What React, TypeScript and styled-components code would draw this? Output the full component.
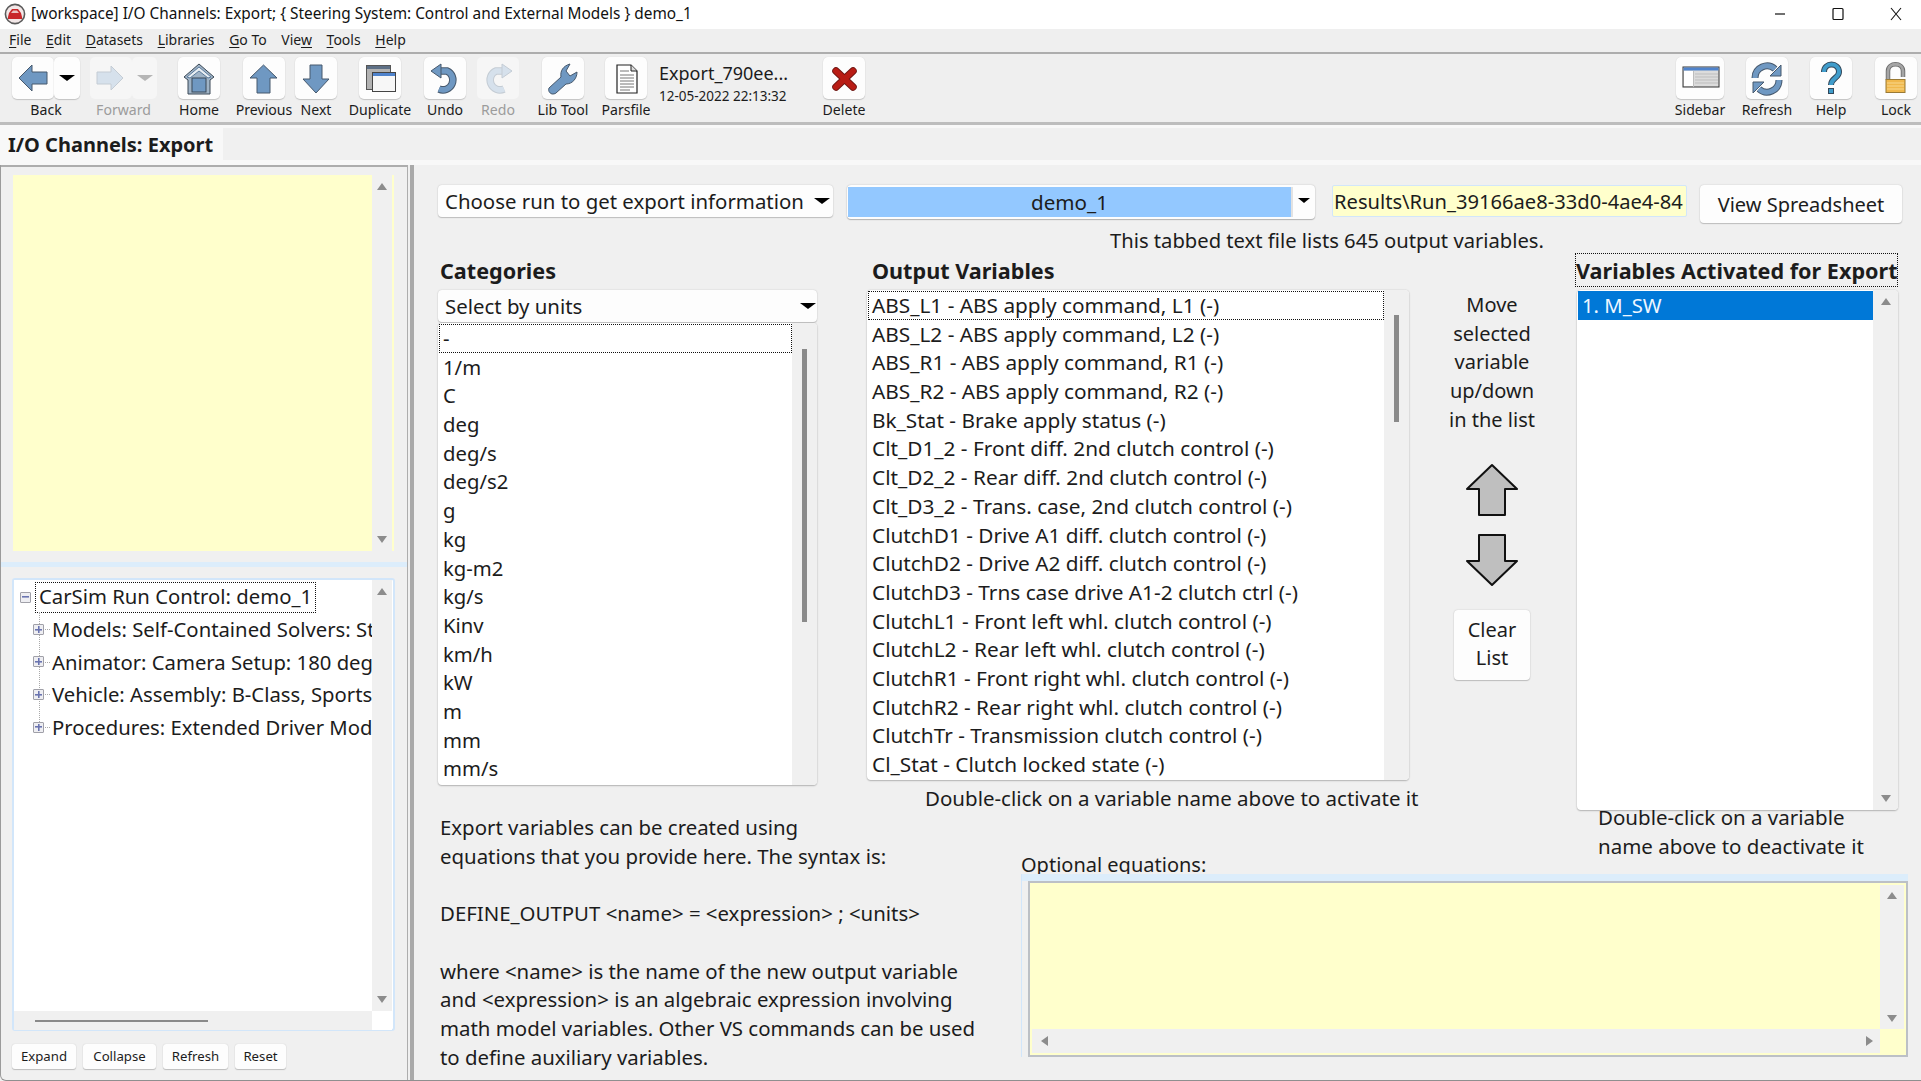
import React from "react";
import styled, { createGlobalStyle } from "styled-components";

const FONT = `"Noto Sans", "Open Sans", sans-serif`;
const TXT = "#1c1c1c";

const Global = createGlobalStyle`
  html, body { margin: 0; padding: 0; background: #f0f0f0; overflow: hidden; }
  * { box-sizing: border-box; }
`;

const Page = styled.div`
  width: 1921px; height: 1081px; display: flex; flex-direction: column;
  background: #f0f0f0; font-family: ${FONT}; color: ${TXT}; overflow: hidden;
`;

/* Title bar */
const TitleBar = styled.div`
  height: 29px; background: #fff; display: flex; align-items: center; padding: 0 0 2px 4px; flex: none;
`;
const TitleText = styled.span`
  font-size: 15.4px; margin-left: 5px; white-space: nowrap; line-height: 26px; color: #111;
`;
const WinControls = styled.div`
  margin-left: auto; display: flex; align-items: center; gap: 34px; padding-right: 13px;
`;

/* Menu */
const MenuBar = styled.div`
  height: 23px; background: #efefef; display: flex; padding: 0 0 2px 9px; gap: 14.6px; align-items: center; flex: none;
`;
const MenuItem = styled.span`
  font-size: 14px; line-height: 21px; white-space: nowrap;
  u { text-underline-offset: 2px; }
`;

/* Toolbar */
const ToolbarWrap = styled.div`
  height: 73px; flex: none; background: #efefef; border-top: 2px solid #adadad; border-bottom: 3px solid #bdbdbd;
  display: flex; padding: 3px 4px 0 12px;
`;
const Slot = styled.div<{ $gap?: number; $w?: number }>`
  margin-left: ${(p) => p.$gap ?? 0}px; width: ${(p) => p.$w ?? 42}px; flex: none;
  display: flex; flex-direction: column; align-items: center;
`;
const ToolFace = styled.div<{ $dim?: boolean; $w?: number; $split?: boolean }>`
  width: ${(p) => p.$w ?? 42}px; height: 42px; border-radius: 5px; background: ${(p) => (p.$dim ? "#f6f6f6" : "#fdfdfd")};
  box-shadow: ${(p) => (p.$dim ? "none" : "0 1px 1px #c4c4c4, 0 0 1px #cfcfcf")};
  display: flex; align-items: center; justify-content: center; flex: none;
`;
const FaceGroup = styled.div`display: flex;`;
const ToolLabel = styled.div<{ $dim?: boolean }>`
  font-size: 14.1px; line-height: 20px; margin-top: 1px; white-space: nowrap;
  color: ${(p) => (p.$dim ? "#9c9c9c" : TXT)};
`;
const FileInfo = styled.div`
  margin-left: 12px; width: 140px; flex: none; padding-top: 4px;
`;
const FileName = styled.div`font-size: 18px; line-height: 25px; white-space: nowrap;`;
const FileDate = styled.div`font-size: 13.5px; line-height: 20px; white-space: nowrap;`;
const Spacer = styled.div`flex: 1;`;
const Caret = styled.div<{ $dim?: boolean; $size?: number }>`
  width: 0; height: 0;
  border-left: ${(p) => p.$size ?? 8.5}px solid transparent; border-right: ${(p) => p.$size ?? 8.5}px solid transparent;
  border-top: ${(p) => ((p.$size ?? 8.5) * 0.8).toFixed(1)}px solid ${(p) => (p.$dim ? "#b5b5b5" : "#000")};
`;

/* Tab strip */
const TabStrip = styled.div`
  height: 35px; flex: none; background: #f0f0f0; border-top: 3px solid #f8f8f8; display: flex;
`;
const Tab = styled.div`
  width: 223px; background: #f8f8f8; font-weight: 700; font-size: 20px; line-height: 33px; padding-left: 8px; white-space: nowrap;
`;

/* Body */
const Body = styled.div`
  flex: 1; display: flex; flex-direction: column; min-height: 0;
  border-bottom: 1px solid #8f8f8f; border-left: 1px solid #9b9b9b; border-bottom-left-radius: 6px;
`;
const TopBand = styled.div`height: 5px; background: #f8f8f8; flex: none; margin-left: -1px;`;
const Columns = styled.div`flex: 1; display: flex; min-height: 0;`;
const Sidebar = styled.aside`
  width: 407px; flex: none; border-top: 2px solid #adadad; border-right: 1px solid #adadad;
  display: flex; flex-direction: column;
`;
const Divider = styled.div`
  width: 4px; margin-left: 2px; flex: none; background: #a9a9a9;
`;

const InfoPanel = styled.div`
  margin: 8px 13px 0 12px; height: 376px; flex: none; background: #ffffcc; display: flex; padding-right: 2px;
`;
const InfoBody = styled.div`flex: 1;`;
const VScroll = styled.div<{ $w?: number; $bg?: string; $pad?: number }>`
  width: ${(p) => p.$w ?? 20}px; flex: none; background: ${(p) => p.$bg ?? "#f0f0f0"};
  display: flex; flex-direction: column; align-items: center; justify-content: space-between;
  padding: ${(p) => p.$pad ?? 8}px 0;
`;
const Arrow = styled.div<{ $dir: "up" | "down" | "left" | "right" }>`
  width: 0; height: 0;
  ${(p) =>
    p.$dir === "up"
      ? "border-left:5px solid transparent;border-right:5px solid transparent;border-bottom:7px solid #8c8c8c;"
      : p.$dir === "down"
      ? "border-left:5px solid transparent;border-right:5px solid transparent;border-top:7px solid #8c8c8c;"
      : p.$dir === "left"
      ? "border-top:5px solid transparent;border-bottom:5px solid transparent;border-right:7px solid #8c8c8c;"
      : "border-top:5px solid transparent;border-bottom:5px solid transparent;border-left:7px solid #8c8c8c;"}
`;
const BlueBand = styled.div`height: 5px; margin-top: 11px; background: #dcedfb; flex: none;`;

const TreeBox = styled.div`
  margin: 11px 12px 0 11px; height: 453px; flex: none; border: 2px solid #d2e6fa; border-radius: 3px; background: #fff;
  display: grid; grid-template-columns: 358px 20px; grid-template-rows: 431px 19px;
`;
const TreeScrollArea = styled.div`overflow: hidden; padding-top: 1px; background: #fff;`;
const TreeRow = styled.div<{ $child?: boolean }>`
  display: flex; align-items: center; height: ${(p) => (p.$child ? 32.6 : 32)}px; white-space: nowrap;
  font-size: 20.3px; position: relative;
`;
const Expander = styled.span<{ $root?: boolean }>`
  width: 11px; height: 11px; border: 1px solid #a0a0a8; background: #eeeef2; border-radius: 1px; flex: none;
  margin-left: ${(p) => (p.$root ? 6 : -6)}px; display: inline-flex; align-items: center; justify-content: center;
`;
const ExpIcon = styled.span<{ $plus?: boolean }>`
  width: 7px; height: 7px; flex: none;
  background:
    linear-gradient(#6a74b0, #6a74b0) center / 7px 1.6px no-repeat
    ${(p) => (p.$plus ? ", linear-gradient(#6a74b0, #6a74b0) center / 1.6px 7px no-repeat" : "")};
`;
const TreeFocus = styled.span`
  border: 1px dotted #111; height: 31px; line-height: 27px; padding: 0 3px; margin-left: 4px;
`;
const TreeChildren = styled.div`
  position: relative; margin-left: 25px;
  &::before { content: ""; position: absolute; left: 0; top: -1px; bottom: 17px; border-left: 1px dotted #a9a9a9; }
`;
const TreeLabel = styled.span`
  margin-left: 8px; position: relative; line-height: 28px;
  &::before { content: ""; position: absolute; left: -7px; top: 50%; width: 5px; border-top: 1px dotted #a9a9a9; }
`;
const HScrollBar = styled.div`
  background: #f0f0f0; display: flex; align-items: center; padding-left: 21px;
`;
const HThumb = styled.div`width: 173px; height: 2px; background: #8a8a8a;`;
const Corner = styled.div`background: #fff;`;

const TreeButtons = styled.div`display: flex; gap: 7px; margin: 13px 0 0 11px;`;
const SmallButton = styled.div<{ $w: number }>`
  width: ${(p) => p.$w}px; height: 25px; background: #fdfdfd; border-radius: 3px; font-size: 13.2px; line-height: 24px;
  text-align: center; box-shadow: 0 1px 1px #bdbdbd, 0 0 1px #bdbdbd;
`;

/* Main */
const Main = styled.main`
  flex: 1; min-width: 0; padding: 20px 0 0 24px; display: flex; flex-direction: column; font-size: 20px;
`;
const TopRow = styled.div`display: flex; height: 38px; flex: none; align-items: flex-start;`;
const SelectBox = styled.div<{ $w: number; $pr: number }>`
  width: ${(p) => p.$w}px; height: 32px; flex: none; background: #fdfdfd; border-radius: 4px;
  box-shadow: 0 1px 1px #bdbdbd, 0 0 1.5px #bdbdbd; display: flex; align-items: center; padding: 0 ${(p) => p.$pr}px 0 7px;
  white-space: nowrap; justify-content: space-between; line-height: 30px; font-size: 20.4px;
`;
const DemoSelect = styled.div`
  margin-left: 14px; width: 468px; height: 34px; flex: none; border-radius: 4px; background: #fdfdfd;
  box-shadow: 0 1px 1px #b3b3b3, 0 0 1.5px #b3b3b3; display: flex; padding: 2px 0 2px 1px;
`;
const DemoValue = styled.div`
  width: 445px; background: #93c8ff; text-align: center; line-height: 30px; border-right: 2px solid #e2e2e2; font-size: 20.6px;
`;
const DemoCaret = styled.div`flex: 1; display: flex; align-items: center; justify-content: center; padding-bottom: 3px;`;
const ResultsField = styled.div`
  margin-left: 17px; width: 355px; height: 32px; flex: none; background: #ffffcc; border: 1px solid #d2e6fa; border-radius: 2px;
  overflow: hidden; white-space: nowrap; line-height: 30px; padding-left: 1px; font-size: 20.15px;
`;
const ViewButton = styled.div`
  margin-left: 13px; width: 202px; height: 38px; flex: none; background: #fdfdfd; border-radius: 4px; text-align: center; line-height: 39px;
  box-shadow: 0 1px 1px #bdbdbd, 0 0 1.5px #bdbdbd; white-space: nowrap;
`;
const HintLine = styled.div`
  height: 30px; flex: none; line-height: 35px; padding-left: 672px; white-space: nowrap; font-size: 20.2px;
`;
const ListsRow = styled.div`display: flex; height: 560px; flex: none;`;
const Column = styled.div<{ $w: number; $gap?: number }>`
  width: ${(p) => p.$w}px; margin-left: ${(p) => p.$gap ?? 0}px; flex: none; display: flex; flex-direction: column;
`;
const Heading = styled.div<{ $focus?: boolean; $pad?: number }>`
  font-weight: 700; font-size: 21.6px; white-space: nowrap;
  height: ${(p) => (p.$focus ? 34 : 37)}px; line-height: 36px; flex: none;
  padding-left: ${(p) => p.$pad ?? 2}px;
  margin-bottom: ${(p) => (p.$focus ? 3 : 0)}px;
  ${(p) => (p.$focus ? "outline: 1px dotted #111; outline-offset: -1px;" : "")}
`;
const ListBox = styled.div<{ $h: number; $mt?: number; $ml?: number }>`
  height: ${(p) => p.$h}px; margin-top: ${(p) => p.$mt ?? 0}px; margin-left: ${(p) => p.$ml ?? 0}px; flex: none; background: #fff; border-radius: 4px;
  box-shadow: 0 1px 1.5px #b5b5b5, 0 0 1.5px #bdbdbd; display: flex; overflow: hidden;
`;
const Rows = styled.div<{ $fs: number }>`flex: 1; min-width: 0; padding: 1px 0 0 1px; font-size: ${(p) => p.$fs}px;`;
const Row = styled.div<{ $focus?: boolean; $sel?: boolean }>`
  height: 28.7px; line-height: 29.4px; padding-left: 4px; white-space: nowrap;
  ${(p) => (p.$focus ? "outline: 1px dotted #111; outline-offset: -1px;" : "")}
  ${(p) => (p.$sel ? "background: #0078d7; color: #eef6ff;" : "")}
`;
const ThumbTrack = styled.div<{ $w: number }>`
  width: ${(p) => p.$w}px; flex: none; background: #f0f0f0; display: flex; justify-content: center;
`;
const Thumb = styled.div<{ $top: number; $h: number }>`
  width: 5px; height: ${(p) => p.$h}px; margin-top: ${(p) => p.$top}px; background: #8a8a8a;
`;
const Caption = styled.div<{ $pad: number; $mt?: number }>`
  padding-left: ${(p) => p.$pad}px; margin-top: ${(p) => p.$mt ?? 0}px; line-height: 28.7px; white-space: nowrap; font-size: 20.5px;
`;
const MoveColumn = styled.div`
  width: 166px; flex: none; padding-top: 38px; display: flex; flex-direction: column; align-items: center;
`;
const MoveText = styled.div`text-align: center; line-height: 28.7px;`;
const MoveArrows = styled.div`display: flex; flex-direction: column; gap: 16px; margin-top: 28px;`;
const ClearButton = styled.div`
  margin-top: 23px; width: 76px; height: 70px; background: #fdfdfd; border-radius: 4px; text-align: center;
  padding-top: 6px; line-height: 28.7px; box-shadow: 0 1px 1px #bdbdbd, 0 0 1.5px #bdbdbd;
`;
const BottomRow = styled.div`flex: 1; display: flex; min-height: 0;`;
const HelpText = styled.div`width: 583px; flex: none; padding-left: 2px; line-height: 28.7px; white-space: pre-line; font-size: 20.4px;`;
const EqColumn = styled.div`flex: 1; display: flex; flex-direction: column; padding-top: 43px;`;
const EqLabel = styled.div`height: 18px; line-height: 18px; white-space: nowrap;`;
const EqFrame = styled.div`
  width: 887px; border-left: 1px solid #d2e6fa; background: linear-gradient(#dcedfb 7px, transparent 7px); padding: 7px 0 0 6px;
`;
const EqBox = styled.div`
  width: 880px; height: 176px; border: 2px solid #bcc0c6; background: #ffffcc; padding: 2px;
  display: grid; grid-template-columns: 1fr 24px; grid-template-rows: 1fr 24px;
`;
const EqHScroll = styled.div`
  background: #f0f0f0; display: flex; align-items: center; justify-content: space-between; padding: 0 7px 0 9px;
`;
const EqBlank = styled.div``;

const BLUE = "#6f98c2";
const EDGE = "#46586c";
const PBLUE = "#d6e1ec";
const PEDGE = "#c4ccd4";

const Ic: React.FC<{ children: React.ReactNode; w?: number }> = ({ children, w = 42 }) => (
  <svg width={w} height={42} viewBox={`0 0 ${w} 42`} fill="none">{children}</svg>
);
const LeftArrow = (
  <Ic><path d="M7 21 L20 8 V15 H35 V27 H20 V34 Z" fill={BLUE} stroke={EDGE} /></Ic>
);
const RightArrow = (
  <Ic><path d="M33 21 L21 9 V15 H7 V27 H21 V33 Z" fill={PBLUE} stroke={PEDGE} /></Ic>
);
const HomeIcon = (
  <Ic>
    <path d="M21 7 L36 20 L32 23 V37 H10 V23 L6 20 Z" fill="#9fb3c6" stroke="#3a4856" />
    <path d="M21 10 L33 20 L30 21 L21 14 L12 21 L9 20 Z" fill="#e8eef3" stroke="#5d7c9c" />
    <rect x="14" y="21" width="14" height="14" fill={BLUE} stroke="#3a4856" />
  </Ic>
);
const UpIcon = <Ic><path d="M20.5 8 L34 21 H27 V36 H14 V21 H7 Z" fill={BLUE} stroke={EDGE} /></Ic>;
const DownIcon = <Ic><path d="M21 36 L8 22 H15 V8 H27 V22 H34 Z" fill={BLUE} stroke={EDGE} /></Ic>;
const DupIcon = (
  <Ic>
    <rect x="7.5" y="8.5" width="24" height="24" fill="#b2b2b2" stroke="#555" />
    <rect x="8" y="9" width="23" height="3" fill="#5d6f85" />
    <rect x="13.5" y="15.5" width="23" height="19" fill="#f7f7f7" stroke="#444" />
    <rect x="14" y="16" width="22" height="3" fill="#4f83cc" />
  </Ic>
);
const UndoIcon = (
  <Ic>
    <path d="M15 14 H23 A9.5 9.5 0 1 1 15 32" stroke={EDGE} strokeWidth="7.5" />
    <path d="M15 14 H23 A9.5 9.5 0 1 1 15 32" stroke={BLUE} strokeWidth="5.5" />
    <path d="M7 14 L17 7 V21 Z" fill={BLUE} stroke={EDGE} />
  </Ic>
);
const RedoIcon = (
  <Ic>
    <path d="M27 14 H19 A9.5 9.5 0 1 0 27 32" stroke={PEDGE} strokeWidth="7.5" />
    <path d="M27 14 H19 A9.5 9.5 0 1 0 27 32" stroke={PBLUE} strokeWidth="5.5" />
    <path d="M35 14 L25 7 V21 Z" fill={PBLUE} stroke={PEDGE} />
  </Ic>
);
const WrenchIcon = (
  <Ic>
    <path d="M10 37 C7 36 6 33 7 31 L19 20 C18 14 21 9 28 7 L24 14 L28 19 L35 15 C35 22 30 27 24 27 L14 36 C13 37 11 37 10 37 Z" fill={BLUE} stroke={EDGE} />
  </Ic>
);
const DocIcon = (
  <Ic>
    <path d="M12 8 H26 L32 14 V36 H12 Z" fill="#fff" stroke="#222" strokeWidth="1.2" />
    <path d="M26 8 V14 H32" fill="#ddd" stroke="#222" />
    <path d="M15 14 H24 M15 18 H29 M15 21 H29 M15 24 H29 M15 27 H29 M15 30 H29 M15 33 H25" stroke="#777" />
  </Ic>
);
const DeleteIcon = (
  <Ic>
    <path d="M13 14 L30 30 M30 14 L13 30" stroke="#6e1410" strokeWidth="7.5" strokeLinecap="round" />
    <path d="M13 14 L30 30 M30 14 L13 30" stroke="#b81c14" strokeWidth="5.8" strokeLinecap="round" />
  </Ic>
);
const SidebarIcon = (
  <Ic w={48}>
    <rect x="7" y="10" width="36" height="20" fill="#dcdcdc" stroke="#333" />
    <rect x="7.5" y="10.5" width="35" height="3" fill="#4f83cc" />
    <rect x="8" y="14" width="9" height="15" fill="#fff" />
    <path d="M17.5 14 V30 M19 17 H42 M19 20 H42 M19 23 H42 M19 26 H42" stroke="#bdbdbd" />
  </Ic>
);
const RefreshIcon = (
  <Ic>
    <path d="M9 21 A12 12 0 0 1 29 12" stroke={EDGE} strokeWidth="7" />
    <path d="M9 21 A12 12 0 0 1 29 12" stroke={BLUE} strokeWidth="5" />
    <path d="M24 19 H35 V8 Z" fill={BLUE} stroke={EDGE} />
    <path d="M33 23 A12 12 0 0 1 13 32" stroke={EDGE} strokeWidth="7" />
    <path d="M33 23 A12 12 0 0 1 13 32" stroke={BLUE} strokeWidth="5" />
    <path d="M18 25 H7 V36 Z" fill={BLUE} stroke={EDGE} />
  </Ic>
);
const HelpIcon = (
  <Ic>
    <path d="M14 15 C14 5 29 5 29 15 C29 21 21 21 21 28" stroke="#33485a" strokeWidth="6" />
    <path d="M14 15 C14 5 29 5 29 15 C29 21 21 21 21 28" stroke="#3f9ccb" strokeWidth="4" />
    <rect x="18.5" y="31.5" width="5" height="5" fill="#3f9ccb" stroke="#33485a" />
  </Ic>
);
const LockIcon = (
  <Ic>
    <path d="M13 23 V14 C13 5 28 5 28 14 V20" stroke="#6a6a6a" strokeWidth="4.5" />
    <path d="M13 23 V14 C13 5 28 5 28 14 V20" stroke="#a5a5a5" strokeWidth="2.8" />
    <rect x="11" y="22.5" width="19" height="13" fill="#f0b84c" stroke="#9a7a35" />
    <path d="M12 26 H29 M12 29 H29 M12 32 H29" stroke="#f8d88e" />
  </Ic>
);

const AppIcon = () => (
  <svg width="22" height="22" viewBox="0 0 22 22">
    <circle cx="11" cy="11" r="9.6" fill="#f3e8e8" stroke="#5a5a5a" strokeWidth="1.6" />
    <path d="M4 14 L5 10 L8 6 H14 L17 10 L18 14 V16 H4 Z" fill="#c8272b" />
    <path d="M7 10 L9 7.5 H13 L15 10 Z" fill="#eac3c3" />
  </svg>
);

const BlockArrow: React.FC<{ down?: boolean }> = ({ down }) => (
  <svg width="54" height="54" viewBox="0 0 54 54">
    <path
      d={down ? "M14 2 H40 V28 H52 L27 52 L2 28 H14 Z" : "M27 2 L52 26 H40 V52 H14 V26 H2 Z"}
      fill="#bfbfbf" stroke="#111" strokeWidth="2" strokeLinejoin="round"
    />
  </svg>
);

const MENUS: [string, string, string][] = [
  ["", "F", "ile"], ["", "E", "dit"], ["", "D", "atasets"], ["", "L", "ibraries"],
  ["", "G", "o To"], ["Vie", "w", ""], ["", "T", "ools"], ["", "H", "elp"],
];
const UNITS = ["-", "1/m", "C", "deg", "deg/s", "deg/s2", "g", "kg", "kg-m2", "kg/s", "Kinv", "km/h", "kW", "m", "mm", "mm/s"];
const VARS = [
  "ABS_L1 - ABS apply command, L1 (-)", "ABS_L2 - ABS apply command, L2 (-)",
  "ABS_R1 - ABS apply command, R1 (-)", "ABS_R2 - ABS apply command, R2 (-)",
  "Bk_Stat - Brake apply status (-)", "Clt_D1_2 - Front diff. 2nd clutch control (-)",
  "Clt_D2_2 - Rear diff. 2nd clutch control (-)", "Clt_D3_2 - Trans. case, 2nd clutch control (-)",
  "ClutchD1 - Drive A1 diff. clutch control (-)", "ClutchD2 - Drive A2 diff. clutch control (-)",
  "ClutchD3 - Trns case drive A1-2 clutch ctrl (-)", "ClutchL1 - Front left whl. clutch control (-)",
  "ClutchL2 - Rear left whl. clutch control (-)", "ClutchR1 - Front right whl. clutch control (-)",
  "ClutchR2 - Rear right whl. clutch control (-)", "ClutchTr - Transmission clutch control (-)",
  "Cl_Stat - Clutch locked state (-)",
];
const TREE = [
  "Models: Self-Contained Solvers: St", "Animator: Camera Setup: 180 deg",
  "Vehicle: Assembly: B-Class, Sports", "Procedures: Extended Driver Mode",
];

export default function App() {
  return (
    <Page>
      <Global />
      <TitleBar>
        <AppIcon />
        <TitleText>[workspace] I/O Channels: Export; {"{"} Steering System: Control and External Models {"}"} demo_1</TitleText>
        <WinControls>
          <svg width="24" height="14" viewBox="0 0 24 14"><path d="M7 7 H17" stroke="#111" strokeWidth="1.2" /></svg>
          <svg width="24" height="14" viewBox="0 0 24 14"><rect x="7" y="1.5" width="10" height="11" rx="1" fill="none" stroke="#111" strokeWidth="1.2" /></svg>
          <svg width="24" height="14" viewBox="0 0 24 14"><path d="M7 1 L17 13 M17 1 L7 13" stroke="#111" strokeWidth="1.1" /></svg>
        </WinControls>
      </TitleBar>
      <MenuBar>
        {MENUS.map(([a, b, c]) => (
          <MenuItem key={a + b + c}>{a}<u>{b}</u>{c}</MenuItem>
        ))}
      </MenuBar>
      <ToolbarWrap>
        <Slot $w={68}>
          <FaceGroup>
            <ToolFace>{LeftArrow}</ToolFace>
            <ToolFace $w={26}><Caret /></ToolFace>
          </FaceGroup>
          <ToolLabel>Back</ToolLabel>
        </Slot>
        <Slot $gap={10} $w={67}>
          <FaceGroup>
            <ToolFace $dim>{RightArrow}</ToolFace>
            <ToolFace $dim $w={25}><Caret $dim /></ToolFace>
          </FaceGroup>
          <ToolLabel $dim>Forward</ToolLabel>
        </Slot>
        <Slot $gap={21}><ToolFace>{HomeIcon}</ToolFace><ToolLabel>Home</ToolLabel></Slot>
        <Slot $gap={23}><ToolFace>{UpIcon}</ToolFace><ToolLabel>Previous</ToolLabel></Slot>
        <Slot $gap={10}><ToolFace>{DownIcon}</ToolFace><ToolLabel>Next</ToolLabel></Slot>
        <Slot $gap={22}><ToolFace>{DupIcon}</ToolFace><ToolLabel>Duplicate</ToolLabel></Slot>
        <Slot $gap={23}><ToolFace>{UndoIcon}</ToolFace><ToolLabel>Undo</ToolLabel></Slot>
        <Slot $gap={11}><ToolFace $dim>{RedoIcon}</ToolFace><ToolLabel $dim>Redo</ToolLabel></Slot>
        <Slot $gap={23}><ToolFace>{WrenchIcon}</ToolFace><ToolLabel>Lib Tool</ToolLabel></Slot>
        <Slot $gap={21}><ToolFace>{DocIcon}</ToolFace><ToolLabel>Parsfile</ToolLabel></Slot>
        <FileInfo>
          <FileName>Export_790ee...</FileName>
          <FileDate>12-05-2022 22:13:32</FileDate>
        </FileInfo>
        <Slot $gap={24}><ToolFace>{DeleteIcon}</ToolFace><ToolLabel>Delete</ToolLabel></Slot>
        <Spacer />
        <Slot $w={48}><ToolFace $w={48}>{SidebarIcon}</ToolFace><ToolLabel>Sidebar</ToolLabel></Slot>
        <Slot $gap={22}><ToolFace>{RefreshIcon}</ToolFace><ToolLabel>Refresh</ToolLabel></Slot>
        <Slot $gap={22}><ToolFace>{HelpIcon}</ToolFace><ToolLabel>Help</ToolLabel></Slot>
        <Slot $gap={23}><ToolFace>{LockIcon}</ToolFace><ToolLabel>Lock</ToolLabel></Slot>
      </ToolbarWrap>
      <TabStrip><Tab>I/O Channels: Export</Tab></TabStrip>
      <Body>
        <TopBand />
        <Columns>
          <Sidebar>
            <InfoPanel>
              <InfoBody />
              <VScroll><Arrow $dir="up" /><Arrow $dir="down" /></VScroll>
            </InfoPanel>
            <BlueBand />
            <TreeBox>
              <TreeScrollArea>
                <TreeRow>
                  <Expander $root><ExpIcon /></Expander>
                  <TreeFocus>CarSim Run Control: demo_1</TreeFocus>
                </TreeRow>
                <TreeChildren>
                  {TREE.map((t) => (
                    <TreeRow key={t} $child>
                      <Expander><ExpIcon $plus /></Expander>
                      <TreeLabel>{t}</TreeLabel>
                    </TreeRow>
                  ))}
                </TreeChildren>
              </TreeScrollArea>
              <VScroll><Arrow $dir="up" /><Arrow $dir="down" /></VScroll>
              <HScrollBar><HThumb /></HScrollBar>
              <Corner />
            </TreeBox>
            <TreeButtons>
              <SmallButton $w={64}>Expand</SmallButton>
              <SmallButton $w={73}>Collapse</SmallButton>
              <SmallButton $w={65}>Refresh</SmallButton>
              <SmallButton $w={51}>Reset</SmallButton>
            </TreeButtons>
          </Sidebar>
          <Divider />
          <Main>
            <TopRow>
              <SelectBox $w={395} $pr={3}>
                <span>Choose run to get export information</span>
                <Caret />
              </SelectBox>
              <DemoSelect>
                <DemoValue>demo_1</DemoValue>
                <DemoCaret><Caret $size={6.5} /></DemoCaret>
              </DemoSelect>
              <ResultsField>Results\Run_39166ae8-33d0-4ae4-84</ResultsField>
              <ViewButton>View Spreadsheet</ViewButton>
            </TopRow>
            <HintLine>This tabbed text file lists 645 output variables.</HintLine>
            <ListsRow>
              <Column $w={379}>
                <Heading>Categories</Heading>
                <SelectBox $w={379} $pr={1}>
                  <span>Select by units</span>
                  <Caret />
                </SelectBox>
                <ListBox $h={462} $mt={1}>
                  <Rows $fs={20.3}>
                    {UNITS.map((u, i) => <Row key={u} $focus={i === 0}>{u}</Row>)}
                  </Rows>
                  <ThumbTrack $w={25}><Thumb $top={26} $h={273} /></ThumbTrack>
                </ListBox>
              </Column>
              <Column $w={542} $gap={50}>
                <Heading $pad={5}>Output Variables</Heading>
                <ListBox $h={490}>
                  <Rows $fs={20.8}>
                    {VARS.map((v, i) => <Row key={v} $focus={i === 0}>{v}</Row>)}
                  </Rows>
                  <ThumbTrack $w={25}><Thumb $top={25} $h={107} /></ThumbTrack>
                </ListBox>
                <Caption $pad={58} $mt={4}>Double-click on a variable name above to activate it</Caption>
              </Column>
              <MoveColumn>
                <MoveText>Move<br />selected<br />variable<br />up/down<br />in the list</MoveText>
                <MoveArrows>
                  <BlockArrow />
                  <BlockArrow down />
                </MoveArrows>
                <ClearButton>Clear<br />List</ClearButton>
              </MoveColumn>
              <Column $w={323}>
                <Heading $focus $pad={1}>Variables Activated for Export</Heading>
                <ListBox $h={520} $ml={2}>
                  <Rows $fs={20.3}>
                    <Row $sel>1. M_SW</Row>
                  </Rows>
                  <VScroll $w={25}><Arrow $dir="up" /><Arrow $dir="down" /></VScroll>
                </ListBox>
                <Caption $pad={23} $mt={-7}>Double-click on a variable<br />name above to deactivate it</Caption>
              </Column>
            </ListsRow>
            <BottomRow>
              <HelpText>
                {"Export variables can be created using\nequations that you provide here. The syntax is:\n\nDEFINE_OUTPUT <name> = <expression> ; <units>\n\nwhere <name> is the name of the new output variable\nand <expression> is an algebraic expression involving\nmath model variables. Other VS commands can be used\nto define auxiliary variables."}
              </HelpText>
              <EqColumn>
                <EqLabel>Optional equations:</EqLabel>
                <EqFrame>
                  <EqBox>
                    <EqBlank />
                    <VScroll $w={24} $pad={7}><Arrow $dir="up" /><Arrow $dir="down" /></VScroll>
                    <EqHScroll><Arrow $dir="left" /><Arrow $dir="right" /></EqHScroll>
                    <EqBlank />
                  </EqBox>
                </EqFrame>
              </EqColumn>
            </BottomRow>
          </Main>
        </Columns>
      </Body>
    </Page>
  );
}
